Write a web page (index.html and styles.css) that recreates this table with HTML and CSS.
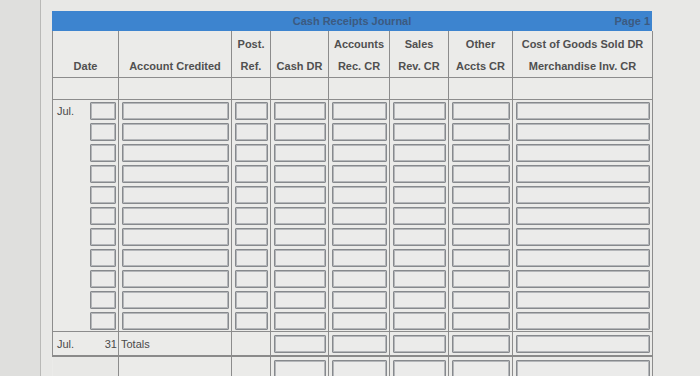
FILE: index.html
```html
<!DOCTYPE html>
<html lang="en">
<head>
    <meta charset="UTF-8">
    <meta name="viewport" content="width=device-width, initial-scale=1.0">
    <title>Cash Receipts Journal</title>
    <link rel="stylesheet" href="styles.css">
</head>
<body>

<div class="page">
    <div class="journal">
        <!-- Title Bar -->
        <div class="journal-title">
            <span></span>
            <span class="title">Cash Receipts Journal</span>
            <span class="page-no">Page 1</span>
        </div>

        <table class="journal-table">
            <colgroup>
                <col style="width: 66px">
                <col style="width: 113px">
                <col style="width: 39px">
                <col style="width: 58px">
                <col style="width: 61px">
                <col style="width: 59px">
                <col style="width: 64px">
                <col style="width: 140px">
            </colgroup>

            <!-- Column Headings -->
            <thead>
                <tr>
                    <th><span>&nbsp;</span><span>Date</span></th>
                    <th><span>&nbsp;</span><span>Account Credited</span></th>
                    <th><span>Post.</span><span>Ref.</span></th>
                    <th><span>&nbsp;</span><span>Cash DR</span></th>
                    <th><span>Accounts</span><span>Rec. CR</span></th>
                    <th><span>Sales</span><span>Rev. CR</span></th>
                    <th><span>Other</span><span>Accts CR</span></th>
                    <th><span>Cost of Goods Sold DR</span><span>Merchandise Inv. CR</span></th>
                </tr>
            </thead>

            <!-- Entries -->
            <tbody>
                <tr class="blank-row"><td></td><td></td><td></td><td></td><td></td><td></td><td></td><td></td></tr>
                <tr><td><div class="date-cell"><span>Jul.</span><input class="day"></div></td><td><input></td><td><input></td><td><input></td><td><input></td><td><input></td><td><input></td><td><input></td></tr>
                <tr><td><div class="date-cell"><span></span><input class="day"></div></td><td><input></td><td><input></td><td><input></td><td><input></td><td><input></td><td><input></td><td><input></td></tr>
                <tr><td><div class="date-cell"><span></span><input class="day"></div></td><td><input></td><td><input></td><td><input></td><td><input></td><td><input></td><td><input></td><td><input></td></tr>
                <tr><td><div class="date-cell"><span></span><input class="day"></div></td><td><input></td><td><input></td><td><input></td><td><input></td><td><input></td><td><input></td><td><input></td></tr>
                <tr><td><div class="date-cell"><span></span><input class="day"></div></td><td><input></td><td><input></td><td><input></td><td><input></td><td><input></td><td><input></td><td><input></td></tr>
                <tr><td><div class="date-cell"><span></span><input class="day"></div></td><td><input></td><td><input></td><td><input></td><td><input></td><td><input></td><td><input></td><td><input></td></tr>
                <tr><td><div class="date-cell"><span></span><input class="day"></div></td><td><input></td><td><input></td><td><input></td><td><input></td><td><input></td><td><input></td><td><input></td></tr>
                <tr><td><div class="date-cell"><span></span><input class="day"></div></td><td><input></td><td><input></td><td><input></td><td><input></td><td><input></td><td><input></td><td><input></td></tr>
                <tr><td><div class="date-cell"><span></span><input class="day"></div></td><td><input></td><td><input></td><td><input></td><td><input></td><td><input></td><td><input></td><td><input></td></tr>
                <tr><td><div class="date-cell"><span></span><input class="day"></div></td><td><input></td><td><input></td><td><input></td><td><input></td><td><input></td><td><input></td><td><input></td></tr>
                <tr><td><div class="date-cell"><span></span><input class="day"></div></td><td><input></td><td><input></td><td><input></td><td><input></td><td><input></td><td><input></td><td><input></td></tr>
            </tbody>

            <!-- Totals -->
            <tfoot>
                <tr class="totals-row">
                    <td><div class="date-cell"><span>Jul.</span><span>31</span></div></td>
                    <td class="label">Totals</td>
                    <td></td>
                    <td><input></td><td><input></td><td><input></td><td><input></td><td><input></td>
                </tr>
                <tr class="after-row">
                    <td></td><td></td><td></td>
                    <td><input></td><td><input></td><td><input></td><td><input></td><td><input></td>
                </tr>
            </tfoot>
        </table>
    </div>
</div>

</body>
</html>
```

FILE: styles.css
```css
/* Global Styles */
body {
    font-family: 'Liberation Sans', Arial, sans-serif;
    background-color: #dfdfdd;
    margin: 0;
    padding: 0;
    color: #444;
    height: 376px;
    overflow: hidden;
}
.page {
    margin-left: 40px;
    height: 100%;
    border-left: 1px solid #b9b9b7;
    background-color: #e8e8e6;
    padding: 11px 0 0 11px;
}
.journal {
    width: 600px;
}

/* Title Bar */
.journal-title {
    display: grid;
    grid-template-columns: 1fr auto 1fr;
    align-items: center;
    height: 20px;
    background-color: #3d84cf;
    font-size: 11px;
    font-weight: bold;
    color: #3c5a80;
}
.journal-title .page-no {
    justify-self: end;
    padding-right: 2px;
}

/* Table */
.journal-table {
    width: 600px;
    table-layout: fixed;
    border-collapse: collapse;
    background-color: #ebebe9;
}
.journal-table th,
.journal-table td {
    border-left: 1px solid #8c8c8c;
    border-right: 1px solid #8c8c8c;
    padding: 0;
}
.journal-table th {
    font-size: 11px;
    font-weight: bold;
    color: #505050;
    border-bottom: 1px solid #8c8c8c;
    padding-top: 2px;
}
.journal-table th span {
    display: block;
    height: 22px;
    line-height: 22px;
    white-space: nowrap;
}
.blank-row td {
    height: 21px;
    border-bottom: 1px solid #8c8c8c;
}
.journal-table tbody tr:not(.blank-row) td {
    height: 21px;
    padding: 0 2px 0 3px;
}

/* Entry boxes */
.journal-table input {
    display: block;
    box-sizing: border-box;
    width: 100%;
    height: 18px;
    margin: 0;
    padding: 0;
    border: 1px solid #86898d;
    box-shadow: inset 0 0 0 1px #b4b6b9;
    background-color: #ebebea;
    border-radius: 1px;
}
.date-cell {
    display: flex;
    justify-content: space-between;
    align-items: center;
    font-size: 11px;
    color: #4a4a4a;
}
.date-cell span:first-child {
    padding-left: 1px;
}
.journal-table input.day {
    width: 26px;
}

/* Totals */
.totals-row td {
    height: 23px;
    padding: 0 2px 0 3px;
    border-top: 1px solid #8c8c8c;
    border-bottom: 2px solid #8a8a8a;
    font-size: 11px;
    color: #4a4a4a;
}
.totals-row td:first-child {
    padding-right: 1px;
}
.totals-row .label {
    padding-left: 2px;
}
.after-row td {
    height: 24px;
    padding: 0 2px 0 3px;
}
.after-row td:first-child {
    border-left: none;
    background-color: #e8e8e6;
}
```
